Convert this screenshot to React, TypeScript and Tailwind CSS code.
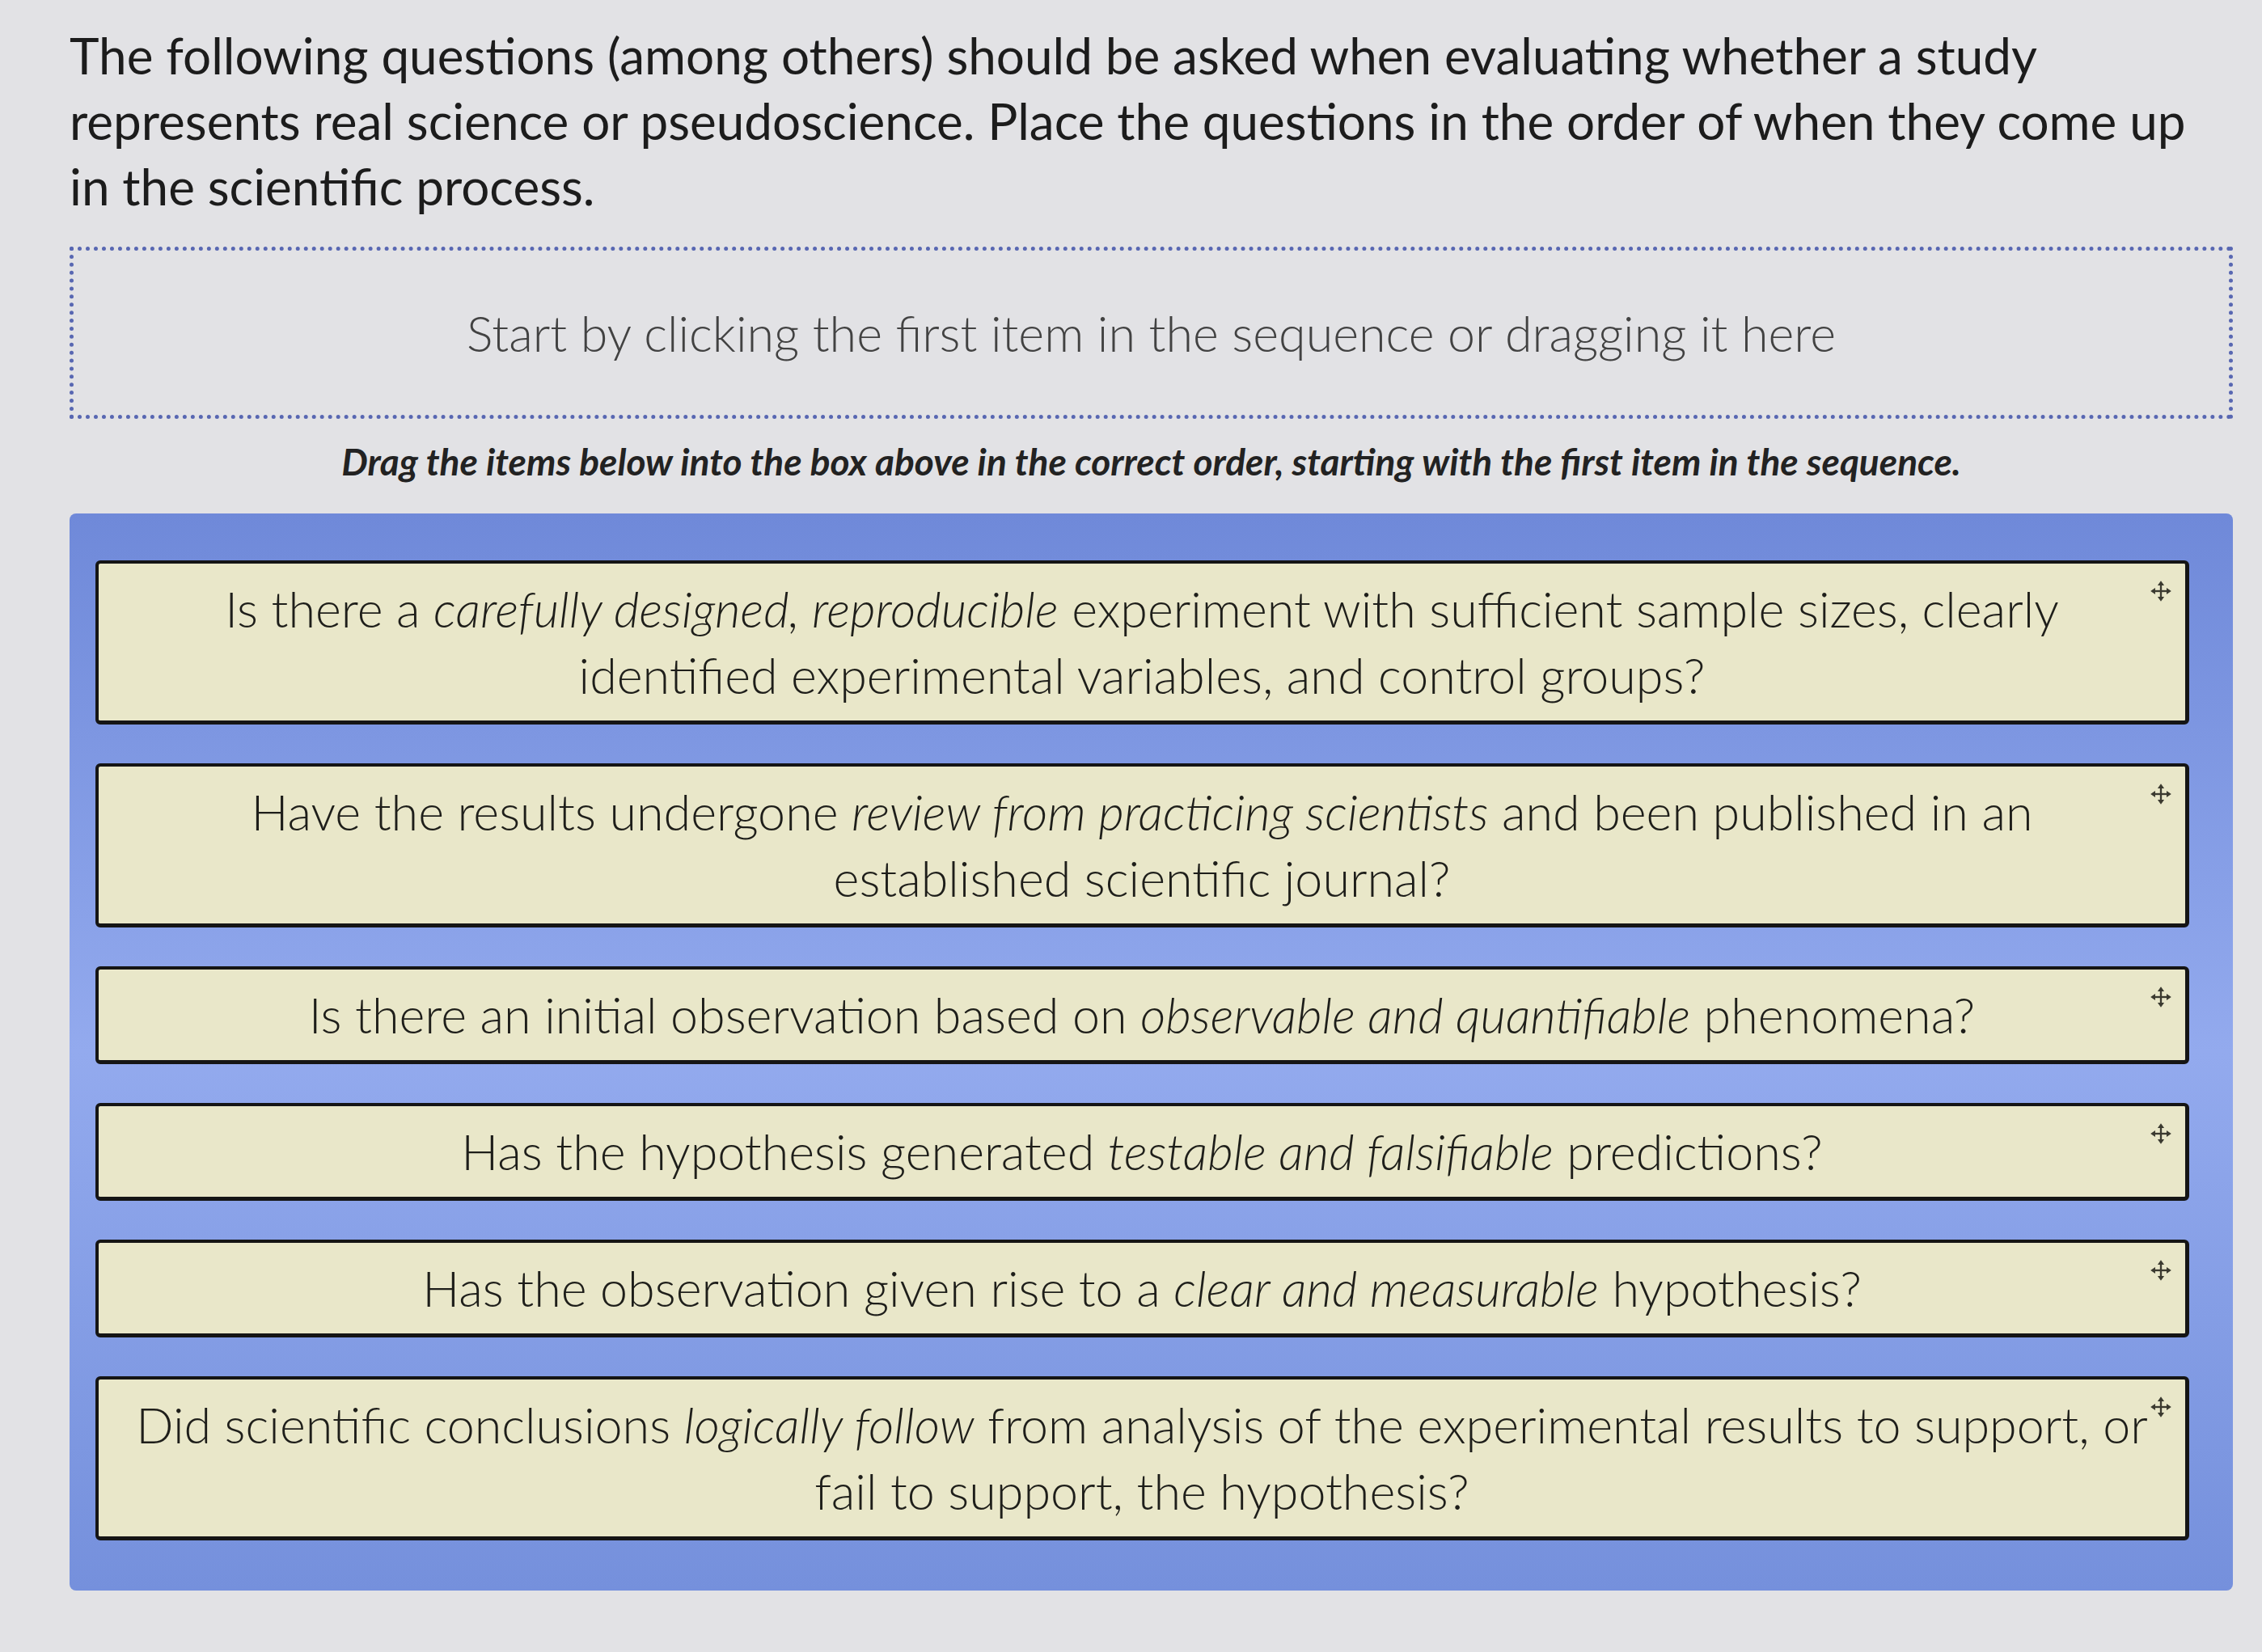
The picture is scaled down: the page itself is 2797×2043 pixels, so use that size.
import React from "react";

type Part = { t: string; i?: boolean };

const items: Part[][] = [
  [
    { t: "Is there a " },
    { t: "carefully designed, reproducible", i: true },
    { t: " experiment with sufficient sample sizes, clearly identified experimental variables, and control groups?" },
  ],
  [
    { t: "Have the results undergone " },
    { t: "review from practicing scientists", i: true },
    { t: " and been published in an established scientific journal?" },
  ],
  [
    { t: "Is there an initial observation based on " },
    { t: "observable and quantifiable", i: true },
    { t: " phenomena?" },
  ],
  [
    { t: "Has the hypothesis generated " },
    { t: "testable and falsifiable", i: true },
    { t: " predictions?" },
  ],
  [
    { t: "Has the observation given rise to a " },
    { t: "clear and measurable", i: true },
    { t: " hypothesis?" },
  ],
  [
    { t: "Did scientific conclusions " },
    { t: "logically follow", i: true },
    { t: " from analysis of the experimental results to support, or fail to support, the hypothesis?" },
  ],
];

function MoveIcon() {
  return (
    <svg width="28" height="28" viewBox="0 0 24 24" fill="#3b3a30">
      <rect x="11" y="5" width="2" height="14" />
      <rect x="5" y="11" width="14" height="2" />
      <polygon points="12,1 8.5,6 15.5,6" />
      <polygon points="12,23 8.5,18 15.5,18" />
      <polygon points="1,12 6,8.5 6,15.5" />
      <polygon points="23,12 18,8.5 18,15.5" />
    </svg>
  );
}

function Card({ parts }: { parts: Part[] }) {
  return (
    <div className="relative rounded-md border-4 border-b-[5px] border-r-[5px] border-[#151515] bg-[#e9e7c9] px-[42px] py-[15px] text-center">
      <p className="text-[61px] font-light leading-[82px] text-[#1e1e1a]">
        {parts.map((p, k) => (p.i ? <em key={k}>{p.t}</em> : <span key={k}>{p.t}</span>))}
      </p>
      <div className="absolute right-[16px] top-[20px]">
        <MoveIcon />
      </div>
    </div>
  );
}

export default function App() {
  return (
    <div
      className="min-h-screen w-full bg-[#e2e2e5] pb-[78px] pl-[86px] pr-[36px] pt-[28px]"
      style={{ fontFamily: "Lato, 'Open Sans', sans-serif" }}
    >
      {/* question prompt */}
      <h1 className="text-[62px] font-normal leading-[81px] text-[#1c1c1c]">
        The following questions (among others) should be asked when evaluating whether a study represents real
        science or pseudoscience. Place the questions in the order of when they come up in the scientific process.
      </h1>

      {/* drop target */}
      <div className="mt-[34px] flex h-[213px] items-center justify-center border-[5px] border-dotted border-[#5867b2]">
        <span className="text-[61px] font-light text-[#424242]">
          Start by clicking the first item in the sequence or dragging it here
        </span>
      </div>

      <p className="mt-[27px] text-center text-[46px] font-bold italic leading-[52px] text-[#222]">
        Drag the items below into the box above in the correct order, starting with the first item in the sequence.
      </p>

      {/* items to sort */}
      <div className="mt-[38px] flex flex-col gap-[48px] rounded-lg bg-linear-to-b from-[#6f89d9] via-[#93aaee] to-[#7590dc] pb-[62px] pl-[32px] pr-[54px] pt-[58px]">
        {items.map((parts, n) => (
          <Card key={n} parts={parts} />
        ))}
      </div>
    </div>
  );
}
